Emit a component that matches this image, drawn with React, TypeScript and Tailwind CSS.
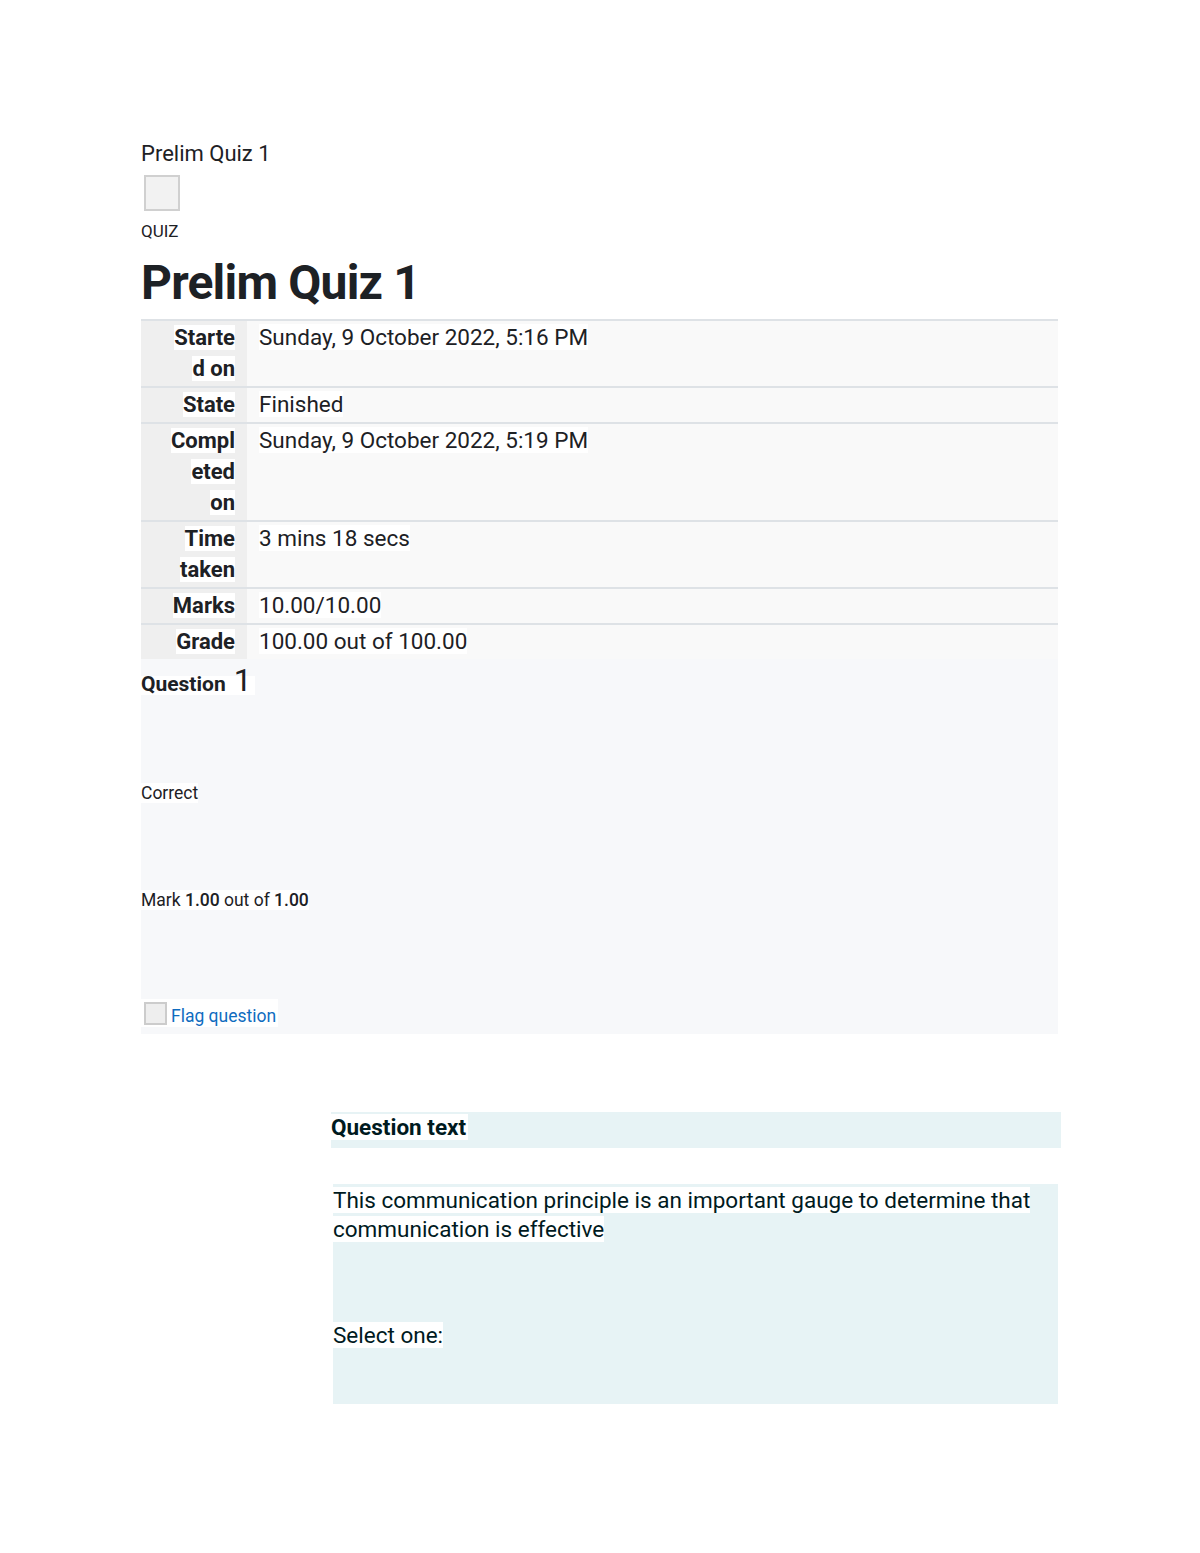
import React from "react";

type Row = { label: string[]; value: string };

const rows: Row[] = [
  { label: ["Starte", "d on"], value: "Sunday, 9 October 2022, 5:16 PM" },
  { label: ["State"], value: "Finished" },
  { label: ["Compl", "eted", "on"], value: "Sunday, 9 October 2022, 5:19 PM" },
  { label: ["Time", "taken"], value: "3 mins 18 secs" },
  { label: ["Marks"], value: "10.00/10.00" },
  { label: ["Grade"], value: "100.00 out of 100.00" },
];

export default function App() {
  return (
    <div className="min-h-[1553px] w-[1200px] bg-white font-['Roboto',sans-serif] text-[#1d2125]">
      <div className="ml-[141px] w-[917px] pt-[140px]">
        <p className="text-[22px] leading-[28px]">Prelim Quiz 1</p>
        <div className="ml-[3px] mt-[7px] h-9 w-9 border-2 border-[#d0d0d0] bg-[#f2f2f2]" />
        <p className="mt-[10px] text-[17px] leading-[20px]">QUIZ</p>
        <h1 className="mt-[14px] text-[48px] font-bold leading-[56px] tracking-[-0.8px]">Prelim Quiz 1</h1>

        {/* summary table */}
        <div className="mt-[8px] flex flex-col">
          {rows.map((r) => (
            <div key={r.value + r.label[0]} className="flex border-t-2 border-[#dee2e6]">
              <div className="w-[106px] bg-[#efefef] pb-[2px] pt-px pr-[12px] text-right text-[22px] font-bold leading-[31px]">
                {r.label.map((l) => (
                  <div key={l}>
                    <span className="bg-white">{l}</span>
                  </div>
                ))}
              </div>
              <div className="flex-1 bg-[#f9f9f9] pb-[2px] pt-px pl-[12px] text-[22.5px] leading-[31px]">
                <span className="bg-white">{r.value}</span>
              </div>
            </div>
          ))}
        </div>

        {/* question info */}
        <div className="flex h-[375px] flex-col bg-[#f7f8fa]">
          <div className="mt-[2px] leading-[38px]">
            <span className="bg-white pr-[3px]">
              <span className="text-[21px] font-bold">Question</span>
              <span className="ml-[8px] text-[32px]">1</span>
            </span>
          </div>
          <div className="mt-[78px] text-[17.5px] leading-[20px]">
            <span className="bg-white">Correct</span>
          </div>
          <div className="mt-[87px] text-[17.5px] leading-[20px]">
            <span className="bg-white">
              Mark <span className="font-medium">1.00</span> out of <span className="font-medium">1.00</span>
            </span>
          </div>
          <div className="mt-[90px] flex h-[26px] items-center">
            <div className="flex items-center bg-white pr-[2px]">
              <div className="ml-[3px] h-[23px] w-[23px] border-2 border-[#cccccc] bg-[#eeeeee]" />
              <span className="ml-[4px] mt-[6px] text-[17.5px] leading-[22px] text-[#0f6cbf]">Flag question</span>
            </div>
          </div>
        </div>

        {/* question text */}
        <div className="ml-[190px] mt-[78px] h-[36px] w-[730px] bg-[#e7f3f5] text-[#001a1e]">
          <span className="bg-white pr-[2px] text-[22.5px] font-bold leading-[30px]">Question text</span>
        </div>
        <div className="ml-[192px] mt-[36px] h-[220px] w-[725px] bg-[#e7f3f5] pt-[2px] text-[22.5px] leading-[29px] text-[#001a1e]">
          <p>
            <span className="bg-white">This communication principle is an important gauge to determine that</span>
            <br />
            <span className="bg-white">communication is effective</span>
          </p>
          <p className="mt-[77px]">
            <span className="bg-white">Select one:</span>
          </p>
        </div>
      </div>
    </div>
  );
}
